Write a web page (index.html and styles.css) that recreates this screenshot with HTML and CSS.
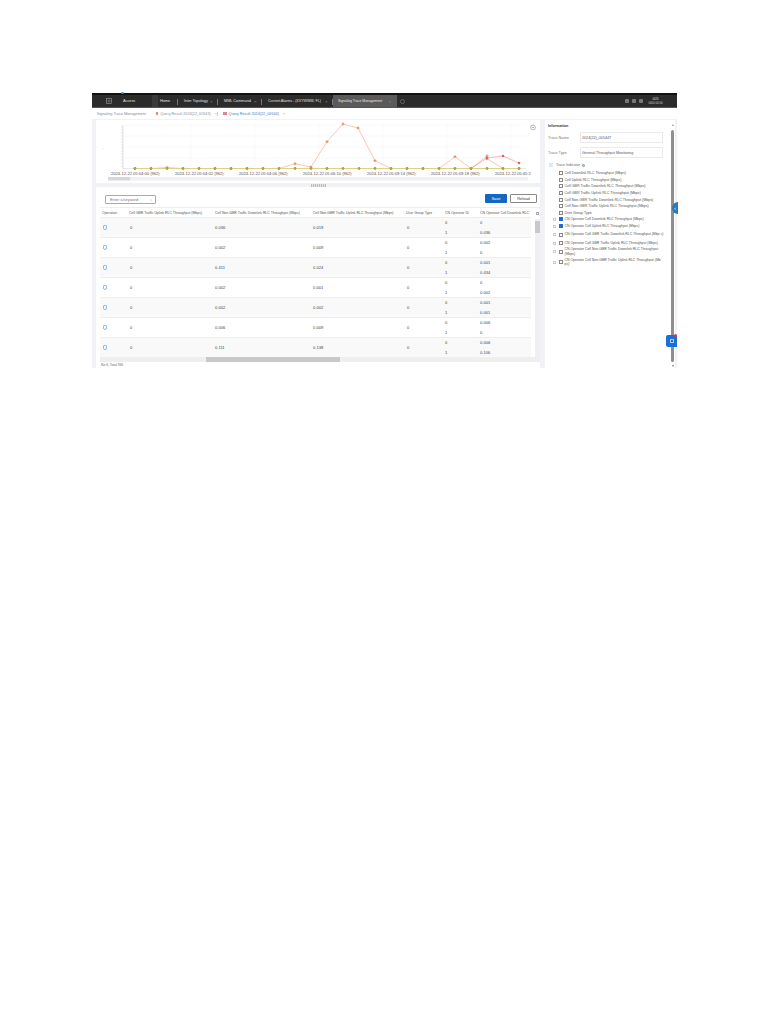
FILE: index.html
```html
<!DOCTYPE html>
<html lang="en">
<head>
<meta charset="utf-8">
<title>Signaling Trace Management</title>
<link rel="stylesheet" href="styles.css">
</head>
<body>
<div class="app">
  <span class="top-dot"></span>
  <header class="topbar">
    <svg class="grid-icon" viewBox="0 0 8 8"><rect x="0.5" y="0.5" width="7" height="7" fill="none" stroke="#999" stroke-width="0.8"/><path d="M0.5 4H7.5M4 0.5V7.5" stroke="#999" stroke-width="0.6"/></svg>
    <span class="tab tab-access">Access</span>
    <span class="tab-mini"></span>
    <span class="tab tab-sep t-home">Home</span>
    <span class="tab tab-sep t-inter">Inter Topology <i>×</i></span>
    <span class="tab tab-sep t-mml">MML Command <i>×</i></span>
    <span class="tab tab-sep t-cur">Current Alarms - (XXYWWW, FL) <i>×</i></span>
    <span class="tab tab-active">Signaling Trace Management <i>×</i></span>
    <span class="tab-add"></span>
    <span class="top-right">
      <span class="top-ic"></span><span class="top-ic"></span><span class="top-ic"></span>
      <span class="clock">0626<br>0000 00:00</span>
    </span>
  </header>
  <nav class="subtabs">
    <span class="sub sub-home">Signaling Trace Management</span>
    <span class="sub sub-q"><b class="sq"></b>Query Result 2024(22_00543) <i>×</i></span>
    <span class="sub sub-cur"><b class="sq"></b>Query Result 2024(22_00544) <i>×</i></span>
  </nav>
  <main class="content">
    <section class="left">
      <div class="chart-card">
        <svg class="chart" viewBox="0 0 444 63" xmlns="http://www.w3.org/2000/svg">
          <defs>
            <marker id="mo" markerWidth="4" markerHeight="4" refX="2" refY="2" markerUnits="userSpaceOnUse"><circle cx="2" cy="2" r="1.3" fill="#e88a5c" stroke="#f6c8ae" stroke-width="0.5"/></marker>
            <marker id="mr" markerWidth="4" markerHeight="4" refX="2" refY="2" markerUnits="userSpaceOnUse"><circle cx="2" cy="2" r="1.3" fill="#e85c5c"/></marker>
            <marker id="my" markerWidth="4" markerHeight="4" refX="2" refY="2" markerUnits="userSpaceOnUse"><circle cx="2" cy="2" r="1.4" fill="#a9a63c"/></marker>
          </defs>
          <g stroke="#f0f0f0" stroke-width="0.5">
            <path d="M27 5V48.5M95 5V48.5M159 5V48.5M223 5V48.5M287 5V48.5M351 5V48.5M415 5V48.5"/>
            <path d="M27 5H430M27 16H430M27 27H430M27 38H430"/>
          </g>
          <path d="M27 5V48.5H430" fill="none" stroke="#c8c8c8" stroke-width="0.4"/>
          <path d="M25.5 7H27M25.5 10H27M25.5 13H27M25.5 16H27M25.5 19H27M25.5 22H27M25.5 25H27M25.5 28H27M25.5 31H27M25.5 34H27M25.5 37H27M25.5 40H27M25.5 43H27M25.5 46H27" stroke="#aaa" stroke-width="0.4"/>
          <polyline class="l-o" points="39,48.5 55,48.5 71,47.5 87,48.5 103,48.5 119,48.5 135,48.5 151,48.5 167,48.5 183,48.5 199,43.7 215,47 231,21.7 247,4 262,8 279,40.7 295,48.5 311,48.5 327,48.5 343,48.5 359,36.7 375,48.5 391,36"/>
          <polyline class="l-o" points="391,38.7 407,48.5 423,48.5"/>
          <polyline class="l-r" points="375,48.5 391,38 407,36 423,43"/>
          <polyline class="l-y" points="39,48.5 55,48.5 71,48.5 87,48.5 103,48.5 119,48.5 135,48.5 151,48.5 167,48.5 183,48.5 199,48.5 215,48.5 231,48.5 247,48.5 263,48.5 279,48.5 295,48.5 311,48.5 327,48.5 343,48.5 359,48.5 375,48.5 391,48.5 407,48.5 423,48.5"/>
          <text class="dash" x="6" y="28.5">-</text>
          <g class="xl">
            <text x="15" y="54.5">2024-12-22 05:04:00 (962)</text>
            <text x="79" y="54.5">2024-12-22 05:04:02 (962)</text>
            <text x="143" y="54.5">2024-12-22 05:04:06 (962)</text>
            <text x="207" y="54.5">2024-12-22 05:06:10 (962)</text>
            <text x="271" y="54.5">2024-12-22 05:09:14 (962)</text>
            <text x="335" y="54.5">2024-12-22 05:09:18 (962)</text>
            <text x="399" y="54.5">2024-12-22 05:45:2</text>
          </g>
          <rect x="12" y="57" width="420" height="3.4" fill="#f0f0f0"/>
          <rect x="12" y="57" width="22" height="3.4" fill="#d8d8d8"/>
          <circle cx="437" cy="7.5" r="2.4" fill="#fff" stroke="#888" stroke-width="0.6"/>
          <path d="M435.8 7.5H438.2" stroke="#888" stroke-width="0.6"/>
        </svg>
      </div>
      <div class="divider"><span class="handle"></span></div>
      <div class="table-card">
        <div class="toolbar">
          <span class="search">Enter a keyword<i>○</i></span>
          <span class="toolbar-btns">
            <button class="btn btn-save">Save</button>
            <button class="btn btn-reload">Reload</button>
          </span>
        </div>
        <div class="table-wrap">
          <table class="grid">
            <colgroup>
              <col class="c1"><col class="c2"><col class="c3"><col class="c4"><col class="c5"><col class="c6"><col class="c7">
            </colgroup>
            <thead>
              <tr>
                <th>Operation</th>
                <th>Cell GBR Traffic Uplink RLC Throughput (Mbps)</th>
                <th>Cell Non-GBR Traffic Downlink RLC Throughput (Mbps)</th>
                <th>Cell Non-GBR Traffic Uplink RLC Throughput (Mbps)</th>
                <th>User Group Type</th>
                <th>CN Operator ID</th>
                <th>CN Operator Cell Downlink RLC</th>
              </tr>
            </thead>
            <tbody>
              <tr class="odd"><td><span class="op"></span></td><td>0</td><td>0.036</td><td>0.019</td><td>0</td><td><div class="two"><span>0</span><span>1</span></div></td><td><div class="two"><span>0</span><span>0.036</span></div></td></tr>
              <tr><td><span class="op"></span></td><td>0</td><td>0.002</td><td>0.009</td><td>0</td><td><div class="two"><span>0</span><span>1</span></div></td><td><div class="two"><span>0.002</span><span>0</span></div></td></tr>
              <tr class="odd"><td><span class="op"></span></td><td>0</td><td>0.411</td><td>0.024</td><td>0</td><td><div class="two"><span>0</span><span>1</span></div></td><td><div class="two"><span>0.001</span><span>0.434</span></div></td></tr>
              <tr><td><span class="op"></span></td><td>0</td><td>0.002</td><td>0.001</td><td>0</td><td><div class="two"><span>0</span><span>1</span></div></td><td><div class="two"><span>0</span><span>0.002</span></div></td></tr>
              <tr class="odd"><td><span class="op"></span></td><td>0</td><td>0.002</td><td>0.002</td><td>0</td><td><div class="two"><span>0</span><span>1</span></div></td><td><div class="two"><span>0.001</span><span>0.001</span></div></td></tr>
              <tr><td><span class="op"></span></td><td>0</td><td>0.006</td><td>0.009</td><td>0</td><td><div class="two"><span>0</span><span>1</span></div></td><td><div class="two"><span>0.006</span><span>0</span></div></td></tr>
              <tr class="odd"><td><span class="op"></span></td><td>0</td><td>0.111</td><td>0.138</td><td>0</td><td><div class="two"><span>0</span><span>1</span></div></td><td><div class="two"><span>0.006</span><span>0.106</span></div></td></tr>
            </tbody>
          </table>
          <div class="vbar"><span class="vthumb"></span></div>
          <span class="col-gear"></span>
        </div>
        <div class="hbar"><span class="hthumb"></span></div>
        <div class="foot">No 6, Total 366</div>
      </div>
    </section>
    <aside class="panel">
      <h2 class="panel-title">Information</h2>
      <div class="field"><label>Trace Name</label><span class="input">2024(22)_00544T</span></div>
      <div class="field"><label>Trace Type</label><span class="input">General Throughput Monitoring</span></div>
      <div class="tree-root"><span class="root-box"></span>Trace Indicator <i class="help">?</i></div>
      <ul class="tree">
        <li><span class="cb"></span>Cell Downlink RLC Throughput (Mbps)</li>
        <li><span class="cb"></span>Cell Uplink RLC Throughput (Mbps)</li>
        <li><span class="cb"></span>Cell GBR Traffic Downlink RLC Throughput (Mbps)</li>
        <li><span class="cb"></span>Cell GBR Traffic Uplink RLC Throughput (Mbps)</li>
        <li><span class="cb"></span>Cell Non-GBR Traffic Downlink RLC Throughput (Mbps)</li>
        <li><span class="cb"></span>Cell Non-GBR Traffic Uplink RLC Throughput (Mbps)</li>
        <li><span class="cb"></span>User Group Type</li>
      </ul>
      <ul class="tree tree-cn">
        <li><span class="ex"></span><span class="cb on"></span><span>CN Operator Cell Downlink RLC Throughput (Mbps)</span></li>
        <li><span class="ex"></span><span class="cb on"></span><span>CN Operator Cell Uplink RLC Throughput (Mbps)</span></li>
        <li class="tall"><span class="ex"></span><span class="cb"></span><span>CN Operator Cell GBR Traffic Downlink RLC Throughput (Mbp s)</span></li>
        <li><span class="ex"></span><span class="cb"></span><span>CN Operator Cell GBR Traffic Uplink RLC Throughput (Mbps)</span></li>
        <li class="tall"><span class="ex"></span><span class="cb"></span><span>CN Operator Cell Non-GBR Traffic Downlink RLC Throughput (Mbps)</span></li>
        <li class="tall"><span class="ex"></span><span class="cb"></span><span>CN Operator Cell Non-GBR Traffic Uplink RLC Throughput (Mb ps)</span></li>
      </ul>
      <span class="panel-up"></span>
      <span class="panel-scroll"></span>
      <span class="panel-down"></span>
    </aside>
  </main>
  <span class="side-circle">‹</span>
  <span class="float-btn"><span class="float-badge"></span><span class="float-ic"></span></span>
</div>
</body>
</html>
```
FILE: styles.css
```css
* { box-sizing: border-box; }
html, body { margin: 0; padding: 0; background: #fff; }
body { min-height: 1024px; font-family: "Liberation Sans", Arial, sans-serif; }
.app {
  position: relative;
  width: 585px;
  height: 275px;
  margin: 93px 0 0 92px;
  display: flex;
  flex-direction: column;
  background: #f1f2f6;
  filter: blur(0.5px);
  color: #555;
  font-size: 3.7px;
}
.top-dot { position: absolute; left: 29px; top: -1px; width: 3px; height: 2px; border-radius: 50%; background: #4a90d9; }
.topbar {
  height: 15px;
  flex: none;
  display: flex;
  align-items: center;
  padding: 2px 0 0 14px;
  background: linear-gradient(#111 0 2px, #2b2b2b 2px);
  color: #e0e0e0;
  border-bottom: 1px solid #555;
  font-size: 3.8px;
}
.grid-icon { width: 6px; height: 6px; flex: none; }
.tab { display: flex; align-items: center; height: 100%; white-space: nowrap; flex: none; }
.tab i { font-style: normal; color: #999; font-size: 4px; margin-left: auto; }
.tab-access { margin-left: 11px; width: 29px; }
.tab-mini { width: 6px; height: 12px; background: #3a3a3a; margin-right: 2px; flex: none; }
.tab-sep { padding: 0 5.5px 0 6px; position: relative; }
.t-home { width: 18px; padding-left: 0; }
.t-inter { width: 40px; }
.t-mml { width: 44px; }
.t-cur { width: 71px; font-size: 3.6px; }
.tab-sep::after { content: ""; position: absolute; right: 0; top: 4px; height: 6px; border-right: 0.6px solid #777; }
.tab-active { width: 64px; background: #5a5a5a; padding: 0 6px 0 5px; color: #e6e6e6; font-size: 3.4px; }
.tab-add { width: 5px; height: 5px; margin-left: 3px; border: 0.5px solid #666; border-radius: 50%; flex: none; }
.top-right { margin-left: auto; display: flex; align-items: center; gap: 3.5px; padding-right: 14px; }
.top-ic { width: 3.5px; height: 3.5px; background: #777; border-radius: 1px; }
.clock { margin-left: 2px; width: 15px; font-size: 2.8px; line-height: 4px; text-align: center; color: #ccc; white-space: nowrap; }
.subtabs { height: 11px; flex: none; display: flex; align-items: center; padding-left: 5px; background: #fff; font-size: 3.75px; color: #8a8f99; white-space: nowrap; }
.sub { display: flex; align-items: center; }
.sub i { font-style: normal; margin-left: 4px; color: #aaa; }
.sub-home { color: #7d8ba0; width: 59px; }
.sub-q { width: 62px; border-right: 0.5px solid #ccc; }
.sub-cur { color: #3d7cc9; margin-left: 5px; }
.sq { width: 3.5px; height: 3.5px; margin-right: 2px; background: #d98a8a; display: inline-block; }
.content { flex: 1; min-height: 0; display: flex; gap: 5px; padding: 1px 5px 0 4px; }
.left { width: 444px; flex: none; display: flex; flex-direction: column; }
.chart-card { height: 63px; flex: none; background: #fff; }
.chart { display: block; width: 444px; height: 63px; }
.chart text { font-family: "Liberation Sans", Arial, sans-serif; }
.xl text { font-size: 4.1px; fill: #555; }
.dash { font-size: 4px; fill: #777; }
.l-o { fill: none; stroke: #f4b28e; stroke-width: 0.7; marker-start: url(#mo); marker-mid: url(#mo); marker-end: url(#mo); }
.l-r { fill: none; stroke: #f09a9a; stroke-width: 0.7; marker-start: url(#mr); marker-mid: url(#mr); marker-end: url(#mr); }
.l-y { fill: none; stroke: #e2cf8e; stroke-width: 1.2; marker-start: url(#my); marker-mid: url(#my); marker-end: url(#my); }
.divider { height: 4px; flex: none; display: flex; justify-content: center; align-items: center; }
.handle { width: 15px; height: 3px; background: repeating-linear-gradient(90deg, #bbb 0 1px, #e4e4e4 1px 2px); }
.table-card { flex: 1; min-height: 0; background: #fff; padding: 7px 0 0 4px; display: flex; flex-direction: column; }
.toolbar { height: 13px; flex: none; display: flex; justify-content: space-between; align-items: flex-start; padding: 0 3px 0 5px; }
.search { width: 51px; height: 9px; margin-top: 1px; border: 0.6px solid #aaa; border-radius: 1px; padding: 0 3px 0 4px; display: flex; align-items: center; justify-content: space-between; color: #777; font-size: 3.9px; }
.search i { font-style: normal; font-size: 3px; }
.toolbar-btns { display: flex; gap: 3px; }
.btn { height: 9px; padding: 0; font: inherit; font-size: 4px; border-radius: 1px; display: flex; align-items: center; justify-content: center; }
.btn-save { width: 22px; background: #1266c4; color: #fff; border: 0; }
.btn-reload { width: 27px; background: #fff; color: #444; border: 0.6px solid #888; }
.table-wrap { position: relative; height: 150px; flex: none; overflow: hidden; border-top: 0.5px solid #eee; }
.grid { width: 431px; table-layout: fixed; border-collapse: separate; border-spacing: 0; }
.c1 { width: 27px; } .c2 { width: 86px; } .c3 { width: 98px; } .c4 { width: 93px; } .c5 { width: 39px; } .c6 { width: 35px; } .c7 { width: 53px; }
.grid th { height: 10px; padding: 0 0 0 2px; font-weight: normal; text-align: left; color: #555; font-size: 3.45px; white-space: nowrap; overflow: hidden; border-bottom: 0.5px solid #eee; }
.grid td { height: 20px; padding: 0 0 0 2px; color: #444; font-size: 4.1px; border-bottom: 0.5px solid #eee; overflow: hidden; }
.grid td:nth-child(2) { padding-left: 3px; }
.grid td:nth-child(5) { padding-left: 3px; }
.odd td { background: #f9f9f9; }
.two { display: flex; flex-direction: column; height: 19px; justify-content: space-around; }
.op { display: block; width: 3.5px; height: 4.5px; margin-left: 1px; border: 0.6px solid #8dbbec; border-radius: 1px 1px 2px 2px; }
.vbar { position: absolute; top: 10.5px; right: 0; width: 5px; bottom: 0; background: #f0f0f0; }
.vthumb { display: block; height: 12px; margin-top: 2px; background: #c9c9c9; }
.col-gear { position: absolute; top: 3.5px; right: 1px; width: 3px; height: 3px; border: 0.5px solid #aaa; }
.hbar { height: 5px; flex: none; background: #efefef; }
.hthumb { display: block; width: 134px; height: 5px; margin-left: 106px; background: #c8c8c8; }
.foot { height: 6px; flex: none; display: flex; align-items: center; font-size: 3.3px; color: #666; padding-left: 1px; }
.panel { position: relative; flex: 1; background: #fff; padding: 4px 9px 0 3px; color: #555; font-size: 3.6px; }
.panel-title { margin: 0 0 3px; height: 5px; line-height: 5px; font-size: 3.7px; font-weight: bold; color: #333; }
.field { height: 11px; margin-bottom: 4px; display: flex; align-items: center; }
.field label { width: 32px; color: #777; flex: none; font-size: 3.8px; }
.input { flex: none; width: 83px; height: 11px; border: 0.5px solid #eaeaea; padding-left: 1px; display: flex; align-items: center; color: #555; font-size: 3.7px; }
.tree-root { height: 6px; display: flex; align-items: center; margin: 3px 0 0 1px; color: #666; font-size: 3.6px; }
.root-box { width: 4px; height: 4px; margin-right: 3px; background: #dce9f8; }
.help { margin-left: 2px; width: 3px; height: 3px; border: 0.4px solid #888; border-radius: 50%; font-style: normal; font-size: 2.4px; line-height: 2.4px; text-align: center; }
.tree { list-style: none; margin: 2px 0 0; padding: 0 0 0 11px; }
.tree li { height: 6.6px; display: flex; align-items: center; white-space: nowrap; }
.cb { width: 4px; height: 4px; margin-right: 1.5px; border: 0.4px solid #888; background: #fff; flex: none; }
.cb.on { background: #1f6fd0; border-color: #1f6fd0; }
.tree-cn { margin: 0; padding-left: 5px; width: 118px; }
.tree-cn li { white-space: normal; line-height: 4.2px; font-size: 3.45px; }
.tree-cn li.tall { height: 10.5px; }
.ex { width: 3px; height: 3px; margin-right: 3px; border: 0.4px solid #ccc; flex: none; }
.panel-up, .panel-down { position: absolute; right: 1px; width: 0; height: 0; border-left: 1.5px solid transparent; border-right: 1.5px solid transparent; }
.panel-up { top: 4px; border-bottom: 2px solid #999; }
.panel-down { bottom: 1px; border-top: 2px solid #777; }
.panel-scroll { position: absolute; right: 1px; top: 10px; bottom: 6px; width: 3px; border-radius: 2px; background: #8e8e8e; }
.side-circle { position: absolute; left: 580px; top: 109px; width: 6px; height: 12px; border-radius: 6px 0 0 6px; background: #2b79b9; color: #fff; font-size: 5px; line-height: 12px; text-align: center; }
.float-btn { position: absolute; left: 574px; top: 242px; width: 11px; height: 12px; border-radius: 2px 0 0 2px; background: #1a6fd8; display: flex; align-items: center; justify-content: center; }
.float-badge { position: absolute; right: 0; top: -1.5px; width: 3.5px; height: 3.5px; border-radius: 50%; background: #e8343f; }
.float-ic { width: 4px; height: 4px; border: 0.5px solid #a9cdf7; }
```
